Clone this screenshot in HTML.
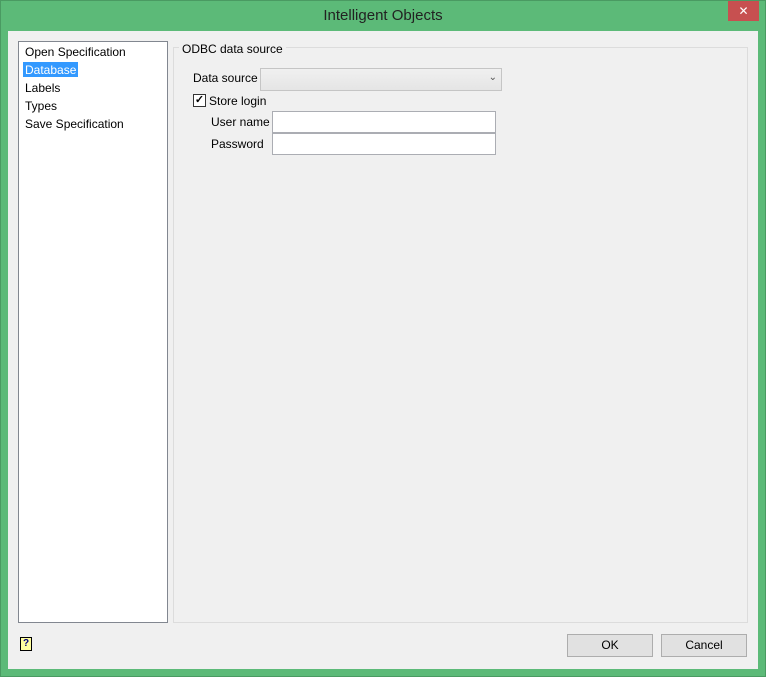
<!DOCTYPE html>
<html><head><style>
body{margin:0;width:766px;height:677px;background:#5cba78;font-family:"Liberation Sans",sans-serif;font-size:12px;color:#000;position:relative;overflow:hidden}
.a{position:absolute}
.frame{left:0;top:0;width:764px;height:675px;border:1px solid #4a9a62}
.client{left:8px;top:31px;width:750px;height:638px;background:#f0f0f0}
.title{left:0;top:7px;width:766px;text-align:center;font-size:15px;color:#222}
.close{left:728px;top:1px;width:31px;height:20px;background:#c75050;color:#fff;text-align:center;font-size:12px;line-height:20px}
.list{left:18px;top:41px;width:148px;height:580px;background:#fff;border:1px solid #828790}
.list div{position:absolute;left:6px;white-space:nowrap}
.grp{left:173px;top:47px;width:573px;height:574px;border:1px solid #dcdcdc}
.inp{background:#fff;border:1px solid #abadb3}
.btn{background:#e1e1e1;border:1px solid #adadad;text-align:center;line-height:21px}
</style></head><body>
<div class="a frame"></div>
<div class="a title">Intelligent Objects</div>
<div class="a close">✕</div>
<div class="a client"></div>
<div class="a list">
<div style="top:3px">Open Specification</div>
<div style="top:20px;left:4px;background:#3399ff;color:#fff;padding:1px 2px 0">Database</div>
<div style="top:39px">Labels</div>
<div style="top:57px">Types</div>
<div style="top:75px">Save Specification</div>
</div>
<div class="a grp"></div>
<div class="a" style="left:179px;top:42px;background:#f0f0f0;padding:0 3px">ODBC data source</div>
<div class="a" style="left:193px;top:71px">Data source</div>
<div class="a" style="left:260px;top:68px;width:240px;height:21px;border:1px solid #c5c5c5;background:linear-gradient(#f0f0f0,#e5e5e5)"><span class="a" style="right:4px;top:3px;font-size:10px;color:#555">⌄</span></div>
<div class="a" style="left:193px;top:94px;width:11px;height:11px;border:1px solid #333;background:#fff;font-size:11px;line-height:11px;text-align:center;font-weight:bold">✓</div>
<div class="a" style="left:209px;top:94px">Store login</div>
<div class="a" style="left:211px;top:115px">User name</div>
<div class="a" style="left:211px;top:137px">Password</div>
<div class="a inp" style="left:272px;top:111px;width:222px;height:20px"></div>
<div class="a inp" style="left:272px;top:133px;width:222px;height:20px"></div>
<div class="a" style="left:20px;top:637px;width:10px;height:12px;border:1px solid #000;background:#ffffa0;font-size:10px;line-height:12px;text-align:center;font-weight:bold;color:#000080">?</div>
<div class="a btn" style="left:567px;top:634px;width:84px;height:21px">OK</div>
<div class="a btn" style="left:661px;top:634px;width:84px;height:21px">Cancel</div>
</body></html>
